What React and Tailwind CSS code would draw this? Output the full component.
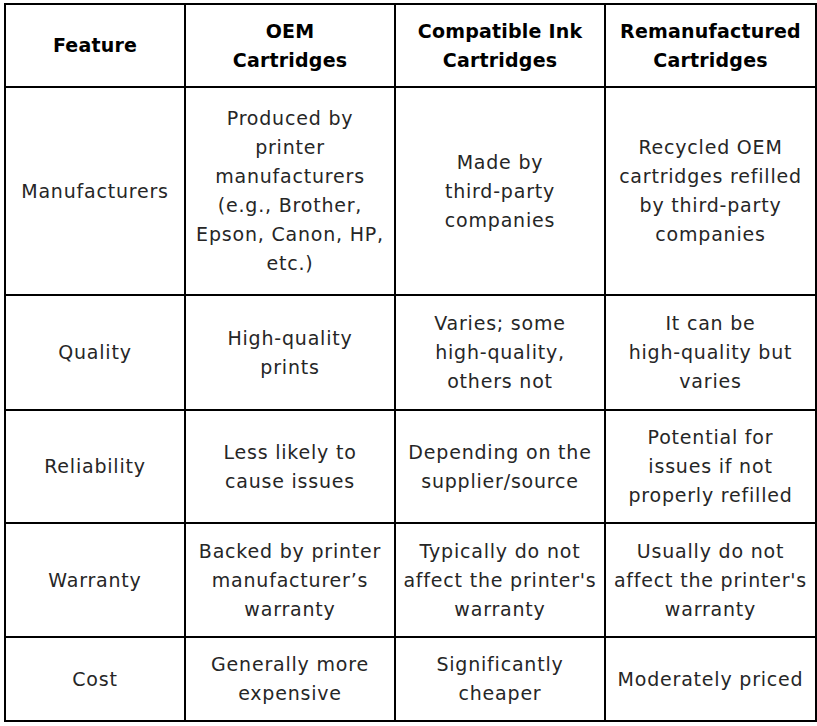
import React from 'react';

const header = ['Feature', 'OEM\nCartridges', 'Compatible Ink\nCartridges', 'Remanufactured\nCartridges'];

const rows = [
  {
    h: 'h-[208px]',
    cells: [
      'Manufacturers',
      'Produced by\nprinter\nmanufacturers\n(e.g., Brother,\nEpson, Canon, HP,\netc.)',
      'Made by\nthird-party\ncompanies',
      'Recycled OEM\ncartridges refilled\nby third-party\ncompanies',
    ],
  },
  {
    h: 'h-[115px]',
    cells: ['Quality', 'High-quality\nprints', 'Varies; some\nhigh-quality,\nothers not', 'It can be\nhigh-quality but\nvaries'],
  },
  {
    h: 'h-[113px]',
    cells: ['Reliability', 'Less likely to\ncause issues', 'Depending on the\nsupplier/source', 'Potential for\nissues if not\nproperly refilled'],
  },
  {
    h: 'h-[114px]',
    cells: [
      'Warranty',
      'Backed by printer\nmanufacturer\u2019s\nwarranty',
      "Typically do not\naffect the printer's\nwarranty",
      "Usually do not\naffect the printer's\nwarranty",
    ],
  },
  {
    h: 'h-[84px]',
    cells: ['Cost', 'Generally more\nexpensive', 'Significantly\ncheaper', 'Moderately priced'],
  },
];

function Lines({ text }) {
  const parts = text.split('\n');
  return parts.map((p, i) => (
    <React.Fragment key={i}>
      {p}
      {i < parts.length - 1 && <br />}
    </React.Fragment>
  ));
}

export default function App() {
  return (
    <div className="bg-white w-[817px] h-[726px] pt-[3px] pl-[4px]" style={{ fontFamily: '"DejaVu Sans", "Liberation Sans", sans-serif' }}>
      <table className="table-fixed border-collapse w-[811px] leading-[29px]">
        <colgroup>
          <col className="w-[180px]" />
          <col className="w-[210px]" />
          <col className="w-[210px]" />
          <col className="w-[211px]" />
        </colgroup>
        <thead>
          <tr className="h-[83px]">
            {header.map((t, i) => (
              <th key={i} className="border-2 border-black text-center align-middle font-bold text-[19px] tracking-[0.2px] text-black px-0">
                <Lines text={t} />
              </th>
            ))}
          </tr>
        </thead>
        <tbody>
          {rows.map((r, ri) => (
            <tr key={ri} className={r.h}>
              {r.cells.map((t, i) => (
                <td key={i} className="border-2 border-black text-center align-middle font-normal text-[19px] text-[#262626] px-0 tracking-[0.8px]">
                  <Lines text={t} />
                </td>
              ))}
            </tr>
          ))}
        </tbody>
      </table>
    </div>
  );
}
